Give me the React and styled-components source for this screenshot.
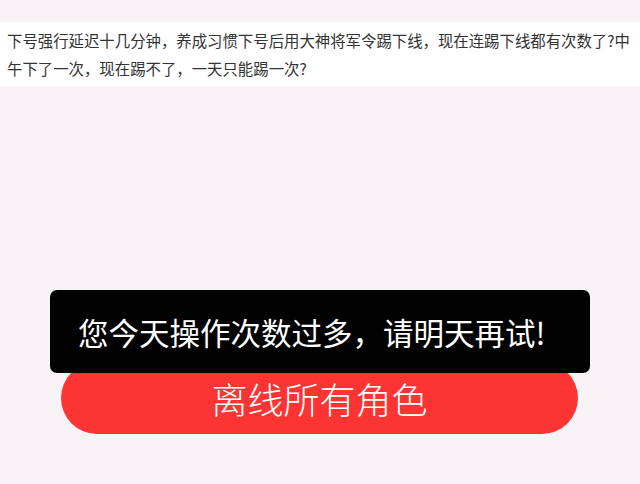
import React from "react";
import styled, { createGlobalStyle } from "styled-components";

const GlobalStyle = createGlobalStyle`
  html, body {
    margin: 0;
    padding: 0;
    background: #f7f3f6;
  }
  body {
    font-family: "Noto Sans CJK SC", "Noto Sans", sans-serif;
  }
`;

const Page = styled.div`
  position: relative;
  width: 640px;
  height: 484px;
  overflow: hidden;
  display: flex;
  flex-direction: column;
`;

const Post = styled.div`
  margin-top: 22px;
  background: #ffffff;
  padding: 4px 4px 4px 7px;
  font-size: 15.4px;
  line-height: 28px;
  color: #333333;
`;

const Button = styled.div`
  margin: 276px 62px 0 61px;
  height: 72px;
  border-radius: 36px;
  background: #fd3434;
  color: #ffffff;
  font-size: 36px;
  font-weight: 300;
  display: flex;
  align-items: center;
  justify-content: center;
`;

const Toast = styled.div`
  position: absolute;
  left: 50px;
  top: 290px;
  width: 540px;
  height: 83px;
  box-sizing: border-box;
  padding-left: 28px;
  border-radius: 7px;
  background: #020202;
  color: #ffffff;
  font-size: 30.5px;
  font-weight: 400;
  display: flex;
  align-items: center;
`;

export default function App() {
  return (
    <>
      <GlobalStyle />
      <Page>
        <Post>
          下号强行延迟十几分钟，养成习惯下号后用大神将军令踢下线，现在连踢下线都有次数了?中午下了一次，现在踢不了，一天只能踢一次?
        </Post>
        <Button>离线所有角色</Button>
        <Toast>您今天操作次数过多，请明天再试!</Toast>
      </Page>
    </>
  );
}
